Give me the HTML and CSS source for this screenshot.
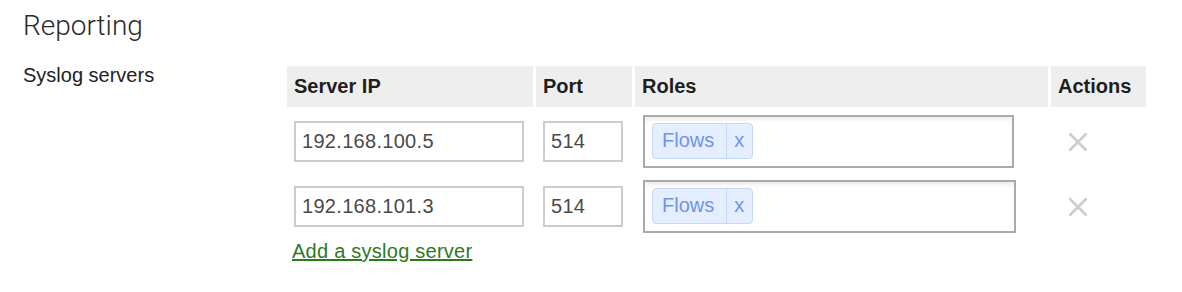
FILE: index.html
```html
<!DOCTYPE html>
<html lang="en">
<head>
  <meta charset="UTF-8" />
  <title>Reporting</title>
  <link rel="stylesheet" href="styles.css">
</head>
<body>
  <div class="page">
    <h2 class="title">Reporting</h2>

    <div class="section">
      <div class="label">Syslog servers</div>

      <div class="servers">
        <div class="grid">
          <!-- Header -->
          <div class="th">Server IP</div>
          <div class="th">Port</div>
          <div class="th">Roles</div>
          <div class="th">Actions</div>

          <!-- Row 1 -->
          <div class="td"><input class="field ip" type="text" value="192.168.100.5" /></div>
          <div class="td"><input class="field port" type="text" value="514" /></div>
          <div class="td">
            <div class="roles">
              <span class="tag"><span class="tag-label">Flows</span><span class="tag-x">x</span></span>
            </div>
          </div>
          <div class="td action">
            <button class="remove" title="Remove">
              <svg width="20" height="20" viewBox="0 0 20 20"><path d="M1.5 1.5 L18.5 18.5 M18.5 1.5 L1.5 18.5" /></svg>
            </button>
          </div>

          <!-- Row 2 -->
          <div class="td"><input class="field ip" type="text" value="192.168.101.3" /></div>
          <div class="td"><input class="field port" type="text" value="514" /></div>
          <div class="td">
            <div class="roles wide">
              <span class="tag"><span class="tag-label">Flows</span><span class="tag-x">x</span></span>
            </div>
          </div>
          <div class="td action">
            <button class="remove" title="Remove">
              <svg width="20" height="20" viewBox="0 0 20 20"><path d="M1.5 1.5 L18.5 18.5 M18.5 1.5 L1.5 18.5" /></svg>
            </button>
          </div>
        </div>

        <a class="add-link" href="#">Add a syslog server</a>
      </div>
    </div>
  </div>
</body>
</html>
```

FILE: styles.css
```css
* {
  box-sizing: border-box;
  margin: 0;
  padding: 0;
}

html, body {
  background: #fff;
  color: #222;
  font-family: 'Liberation Sans', Arial, sans-serif;
  font-size: 20px;
}

.page {
  padding: 9px 23px 0;
}

.title {
  font-family: Roboto, 'Liberation Sans', sans-serif;
  font-size: 28px;
  font-weight: 300;
  line-height: 34px;
  color: #2a2a2a;
}

.section {
  display: flex;
  margin-top: 23px;
}

.label {
  width: 264px;
  line-height: 18px;
  color: #222;
}

.grid {
  display: grid;
  grid-template-columns: 246px 96px 413px 95px;
  column-gap: 3px;
}

.th {
  height: 41px;
  background: #eeeeee;
  padding: 0 7px 2px;
  display: flex;
  align-items: center;
  font-weight: bold;
  line-height: 24px;
  color: #1e1e1e;
}

.td {
  height: 65px;
  padding: 8px 7px 4px;
  display: flex;
  align-items: center;
}

.field {
  height: 41px;
  border: 2px solid #cccccc;
  padding: 0 6px;
  font-family: inherit;
  font-size: 20px;
  letter-spacing: 0.3px;
  color: #4a4a4a;
  background: #fff;
  outline: none;
}

.field.ip {
  width: 230px;
}

.field.port {
  width: 80px;
}

.roles {
  width: 371px;
  height: 53px;
  margin-left: 1px;
  border: 2px solid #aaaaaa;
  padding: 6px 7px;
  display: flex;
  align-items: flex-start;
  box-shadow: inset 0 6px 6px -5px rgba(0, 0, 0, 0.12);
}

.roles.wide {
  width: 373px;
}

.tag {
  display: flex;
  height: 36px;
  background: #e4eeff;
  border: 1px solid #c4d7f8;
  border-radius: 4px;
  color: #6f94e6;
  line-height: 33px;
}

.tag-label {
  padding: 0 12px 0 9px;
  border-right: 1px solid #c4d7f8;
}

.tag-x {
  padding: 0 8px 0 7px;
}

.action {
  padding-left: 17px;
}

.remove {
  background: none;
  border: none;
  width: 20px;
  height: 20px;
  display: flex;
  cursor: pointer;
}

.remove svg path {
  stroke: #cccccc;
  stroke-width: 2.6;
  fill: none;
}

.add-link {
  display: inline-block;
  margin: 2px 0 0 5px;
  line-height: 24px;
  letter-spacing: 0.25px;
  color: #2b7a1c;
  text-decoration: underline;
}
```
